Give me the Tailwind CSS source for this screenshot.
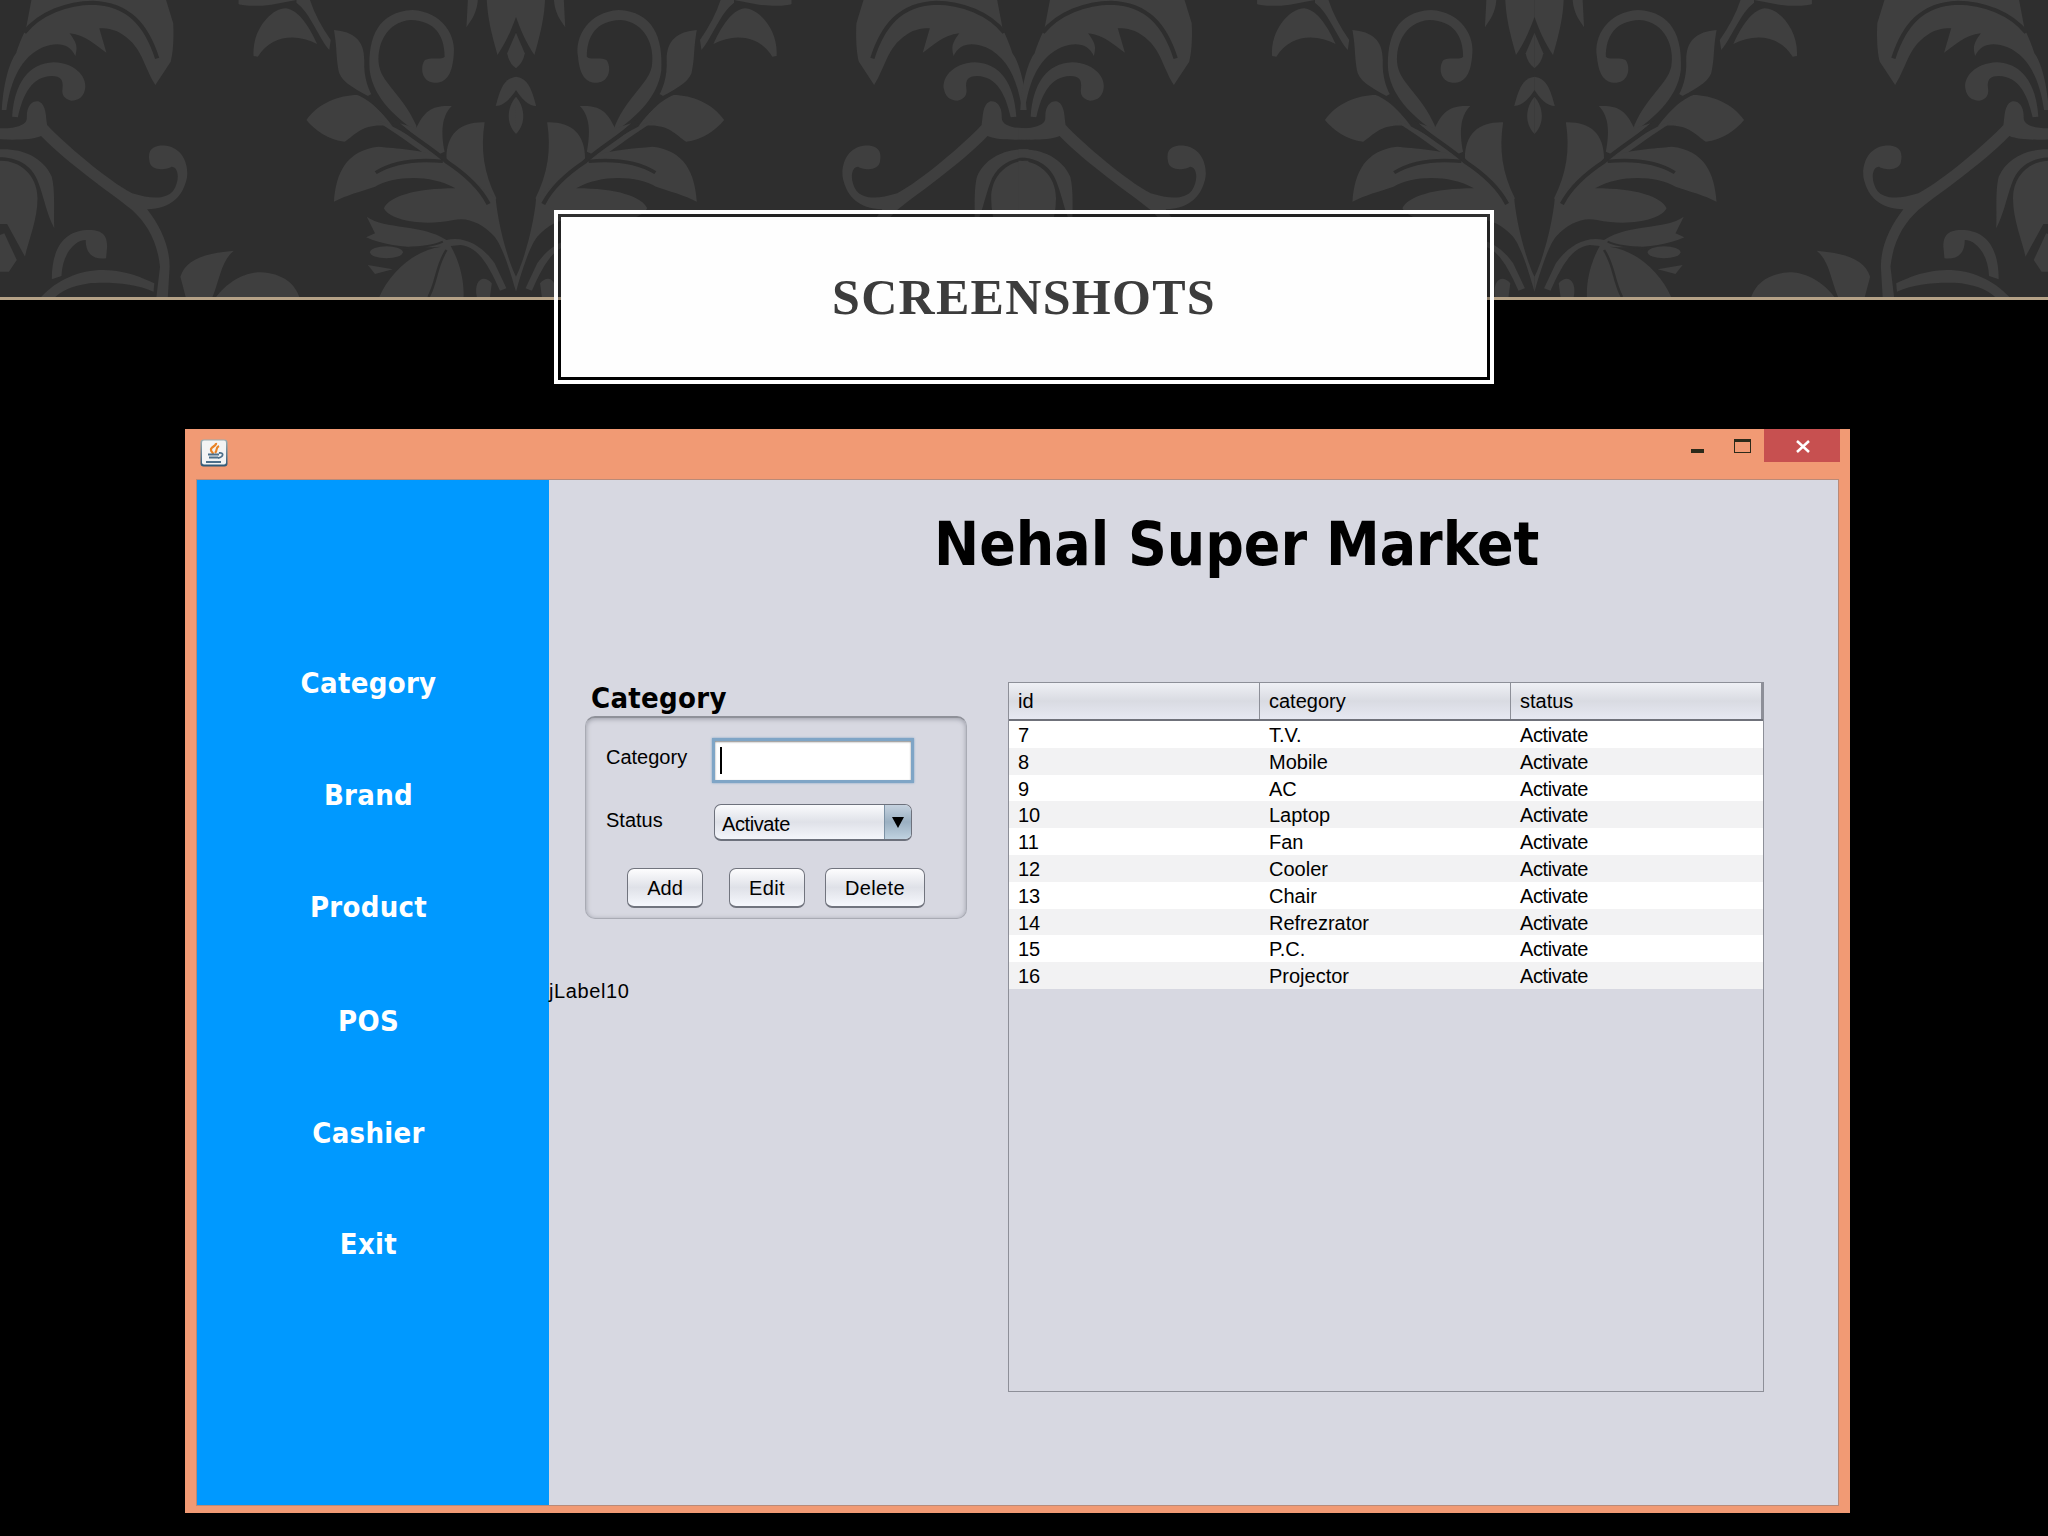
<!DOCTYPE html>
<html lang="en">
<head>
<meta charset="utf-8">
<title>Screenshots</title>
<script src="https://cdn.jsdelivr.net/npm/@tailwindcss/browser@4"></script>
</head>
<body class="w-[2048px] h-[1536px] overflow-hidden bg-black text-black">
<div class="relative w-[2048px] h-[1536px] overflow-hidden">
  <!-- damask band -->
  <header class="h-[300px] border-b-[3px] border-[#b5a287] bg-[#2e2e2e]">
    <svg class="block w-full h-full" viewBox="0 0 2048 297" preserveAspectRatio="none">
      <defs>
        <g id="damask" transform="scale(.35714 .33333)" fill="#3f3f3f">
          <path d="M5 330C10 240 30 180 45 160C60 110 72 90 72 90L88 0H465L485 70C488 130 482 170 478 185L435 255C400 195 400 145 345 105C320 85 290 85 278 85L298 158C270 138 240 105 195 100C215 130 218 140 211 168C195 130 160 125 120 142C60 170 30 240 18 330Z"/>
          <path d="M34 350C40 250 80 190 150 187C220 190 245 240 238 268C235 290 220 302 200 302C180 298 172 285 175 265C178 240 170 228 145 228C90 230 65 280 50 352Z"/>
          <path d="M0 385C40 385 78 378 75 350C75 312 95 300 110 305C130 315 128 350 132 375C180 430 300 540 370 580C430 600 468 595 485 572C505 540 500 500 480 500C470 508 420 518 418 480C412 440 440 435 465 437C520 445 530 510 522 540C510 590 480 625 412 628C450 680 475 740 475 800L470 891H438L448 800C440 720 410 670 370 630C300 570 200 500 115 408C90 420 40 420 0 418Z"/>
          <path d="M0 448C60 445 120 470 145 530C155 570 150 640 152 685C130 640 125 600 108 550C90 490 40 472 0 472Z"/>
          <path d="M0 482C50 480 105 520 105 595C105 660 80 720 70 770L20 672H0Z"/>
          <path d="M0 705L12 700L47 780L25 815H0Z"/>
          <path d="M145 838C145 730 190 690 250 690C290 690 300 710 300 740L297 775C260 780 240 760 240 720C210 720 175 760 172 828Z"/>
          <path d="M115 891C160 840 220 810 290 810C360 812 400 835 432 850L430 875C380 850 300 845 250 850C200 858 170 875 155 891Z"/>
          <path d="M520 891L505 830C520 780 570 760 655 752C620 780 615 840 595 891Z"/>
          <path d="M605 891C650 830 700 817 730 817C790 820 825 850 838 891Z"/>
          <path d="M668 0H830L760 14C720 20 680 18 668 12Z"/>
          <path d="M830 0H868C880 40 900 80 926 120L922 150C890 110 870 40 830 8Z"/>
          <path d="M710 168C705 90 760 25 800 25C840 30 870 90 888 132C830 100 760 105 722 170Z"/>
          <path d="M935 90C990 95 1020 120 1020 180C1018 230 1030 270 1050 300C1000 270 960 250 950 220C940 170 945 150 935 90Z"/>
          <path d="M1170 400C1120 360 1045 300 1035 210C1030 110 1060 35 1155 30C1240 35 1280 110 1270 170C1265 230 1245 250 1215 248C1180 245 1175 200 1190 180C1210 170 1235 182 1245 170C1245 110 1220 62 1150 60C1080 65 1052 140 1062 200C1072 250 1130 290 1165 375Z"/>
          <path d="M858 360C890 310 950 285 1000 285C1040 300 1080 350 1100 380C1020 365 1000 400 965 425C920 420 880 390 858 360Z"/>
          <path d="M1050 360C1110 375 1180 430 1240 480L1200 470C1160 440 1110 400 1050 360Z"/>
          <path d="M1120 370L1165 385C1190 330 1210 315 1265 318C1235 350 1235 400 1245 455L1225 465Z"/>
          <path d="M1250 475C1250 400 1290 365 1357 367C1345 450 1355 520 1390 595L1370 620Z"/>
          <path d="M935 605C940 520 970 450 1060 440C1110 445 1180 450 1215 465C1270 490 1330 550 1388 595C1395 680 1425 790 1445 830V876C1420 780 1400 730 1385 710C1350 670 1310 650 1270 660C1180 680 1090 660 1075 625C1090 590 1160 565 1275 565C1200 520 1100 530 1050 560C1010 575 970 585 935 605Z"/>
          <path d="M1027 650C1080 690 1180 670 1250 720C1310 705 1360 750 1385 790L1418 865L1400 872C1370 800 1340 740 1290 735L1262 738C1290 790 1300 850 1298 891H1062C1090 820 1160 750 1235 740C1160 745 1080 740 1025 712L1050 700Z"/>
          <ellipse cx="1082" cy="757" rx="46" ry="18"/>
          <path d="M1030 795L1100 808L1050 822Z"/>
          <path d="M1335 891C1325 840 1355 820 1377 850L1372 891Z"/>
          <path d="M1363 0H1445V50C1430 95 1415 130 1393 165C1370 80 1365 40 1363 0Z"/>
          <path d="M1310 0H1338C1335 40 1320 60 1306 82Z"/>
          <path d="M1445 98L1420 160Q1425 190 1445 205Z"/>
          <path d="M1445 230C1410 235 1400 270 1388 318C1410 318 1430 295 1445 270Z"/>
          <path d="M1445 290C1420 320 1415 370 1445 402Z"/>
          <g fill="none" stroke="#2e2e2e" stroke-width="12">
            <path d="M68 98C110 40 190 8 260 8C360 12 410 75 440 175"/>
            <path d="M1035 285C1100 385 1190 425 1250 485C1300 520 1345 565 1368 612"/>
            <path d="M1052 518C1110 480 1180 478 1240 484" stroke-width="10"/>
            <path d="M1130 745C1170 742 1210 740 1240 725" stroke-width="6"/>
            <path d="M1250 750C1220 800 1225 840 1200 891" stroke-width="7"/>
          </g>
        </g>
      </defs>
      <use href="#damask"/>
      <use href="#damask" transform="translate(1028.4 0) scale(-.993 1)"/>
      <use href="#damask" transform="translate(1018.5 0)"/>
      <use href="#damask" transform="translate(2050.5 0) scale(-1 1)"/>
    </svg>
  </header>

  <!-- slide title -->
  <div class="absolute left-[554px] top-[210px] w-[940px] h-[174px] border-4 border-white p-[3px] shadow-[inset_0_0_0_3px_#00000040]">
    <h1 class="flex h-full items-center justify-center bg-[#fefefe] font-['Liberation_Serif'] text-[50px] font-bold leading-none tracking-[1.3px] text-[#3c3c3c]">SCREENSHOTS</h1>
  </div>

  <!-- application window -->
  <main class="ml-[185px] mt-[129px] flex h-[1084px] w-[1665px] flex-col bg-[#f19a74] px-[11px] pb-[7px]">
    <div class="flex h-[50px] items-start">
      <svg class="ml-[4px] mt-[10px] size-[28px]" viewBox="0 0 28 28">
        <defs><linearGradient id="jb" x1="0" y1="0" x2="0" y2="1"><stop offset="0" stop-color="#9bb0b4"/><stop offset="1" stop-color="#2f5876"/></linearGradient></defs>
        <rect x=".5" y=".5" width="27" height="27" rx="3" fill="url(#jb)"/>
        <rect x="2" y="1.5" width="24" height="24" rx="2" fill="#f3f4f4"/>
        <path d="M16 4C17 7 10 8 11 11C11 13 13 13 13 15M19 7C15 9 18 11 15 14" fill="none" stroke="#e98325" stroke-width="2.2"/>
        <path d="M8 15.5H19M9 18.5H18M6 23H21" fill="none" stroke="#4d6f8a" stroke-width="2"/>
        <path d="M19 14C24 13 24 18 18 19" fill="none" stroke="#4d6f8a" stroke-width="1.8"/>
      </svg>
      <div class="-mr-px ml-auto flex items-start">
        <span class="mt-[20px] block h-[4px] w-[13px] bg-[#2c2a1a]"></span>
        <span class="ml-[30px] mt-[10px] block h-[14px] w-[17px] border border-t-[3px] border-[#2c2a1a]"></span>
        <span class="ml-[13px] flex h-[33px] w-[76px] items-center justify-center bg-[#c75050] pl-px pt-[2px]">
          <svg class="h-[13px] w-[14px]" viewBox="0 0 14 13"><path d="M1 1L13 12M13 1L1 12" stroke="#fff" stroke-width="2.5"/></svg>
        </span>
      </div>
    </div>
    <div class="flex min-h-0 flex-1 border border-[#b98a78] bg-[#d7d8e1]">
      <nav class="flex w-[352px] flex-col bg-[#0099ff] pr-[9px] pt-[148px] font-['DejaVu_Sans_Condensed','DejaVu_Sans'] text-[29px] font-bold tracking-[0.3px] text-white [font-stretch:condensed]">
        <a class="flex h-[112px] items-center justify-center">Category</a>
        <a class="flex h-[112px] items-center justify-center">Brand</a>
        <a class="flex h-[112px] items-center justify-center">Product</a>
        <a class="flex h-[112px] items-center justify-center pt-[4px]">POS</a>
        <a class="flex h-[112px] items-center justify-center pt-[4px]">Cashier</a>
        <a class="flex h-[112px] items-center justify-center pt-[2px]">Exit</a>
      </nav>
      <section class="flex flex-1 flex-col font-['Liberation_Sans'] text-[20px]">
        <h2 class="ml-[385px] mt-[28px] h-[72px] whitespace-nowrap font-['DejaVu_Sans_Condensed','DejaVu_Sans'] text-[60px] font-bold leading-[72px] [font-stretch:condensed]">Nehal Super Market</h2>
        <div class="mt-[101px] flex">
          <div class="w-[459px]">
            <h3 class="ml-[42px] h-[35px] font-['DejaVu_Sans_Condensed','DejaVu_Sans'] text-[29px] font-bold leading-[35px] tracking-[0.3px] [font-stretch:condensed]">Category</h3>
            <div class="ml-[36px] h-[203px] w-[382px] rounded-[10px] border border-t-2 border-[#a9abb4] border-t-[#8f9199] pl-[20px] pt-[20px] shadow-[inset_0_1px_5px_#9a9ca6]">
              <div class="flex h-[45px] items-center">
                <label class="w-[106px] pb-[7px]">Category</label>
                <div class="flex h-[45px] w-[202px] items-center border-[3px] border-[#7fa5c6] bg-white pl-[5px] shadow-[inset_0_1px_2px_#888,0_0_2px_#7fa5c6]"><span class="h-[27px] w-[2px] bg-black"></span></div>
              </div>
              <div class="mt-[21px] flex h-[37px] items-center">
                <label class="w-[108px] pb-[5px]">Status</label>
                <div class="flex h-[37px] w-[198px] overflow-hidden rounded-[7px] border border-b-2 border-[#6d717c] bg-linear-to-b from-[#fafbfd] via-[#dfe1e8] to-[#f4f6fb]">
                  <span class="flex-1 pl-[7px] pt-[2px] leading-[35px] tracking-[-0.4px]">Activate</span>
                  <span class="flex w-[27px] items-start justify-center border-l border-[#7d92a5] bg-linear-to-b from-[#c5d2df] via-[#9bb0c2] to-[#c0d2e0] pt-[12px]"><svg class="h-[11px] w-[12px]" viewBox="0 0 12 11"><path d="M0 0H12L6 11Z"/></svg></span>
                </div>
              </div>
              <div class="mt-[27px] flex pl-[21px]">
                <button class="h-[40px] w-[76px] rounded-[7px] border border-b-2 border-[#71747e] bg-linear-to-b from-[#fdfdfe] via-[#dfe1e8] to-[#f6f8fd] pt-px">Add</button>
                <button class="ml-[26px] h-[40px] w-[76px] rounded-[7px] border border-b-2 border-[#71747e] bg-linear-to-b from-[#fdfdfe] via-[#dfe1e8] to-[#f6f8fd] pt-px tracking-[0.4px]">Edit</button>
                <button class="ml-[20px] h-[40px] w-[100px] rounded-[7px] border border-b-2 border-[#71747e] bg-linear-to-b from-[#fdfdfe] via-[#dfe1e8] to-[#f6f8fd] pt-px tracking-[0.4px]">Delete</button>
              </div>
            </div>
            <p class="mt-[58px] leading-[28px] tracking-[0.6px]">jLabel10</p>
          </div>
          <div class="mt-[1px] h-[710px] w-[756px] border-[1.5px] border-[#8d8f98]">
            <div class="grid h-[38px] grid-cols-[251px_251px_1fr] border-b-2 border-[#6f717a] bg-linear-to-b from-[#eff0f5] via-[#d9dbe2] to-[#e6e8f2] leading-[36px]">
              <span class="border-r border-[#8d8f98] pl-[9px]">id</span><span class="border-r border-[#8d8f98] pl-[9px]">category</span><span class="border-r-2 border-[#8d8f98] pl-[9px]">status</span>
            </div>
            <div id="rows"></div>
          </div>
        </div>
      </section>
    </div>
  </main>
</div>
<script>
  const data = [[7,'T.V.'],[8,'Mobile'],[9,'AC'],[10,'Laptop'],[11,'Fan'],[12,'Cooler'],[13,'Chair'],[14,'Refrezrator'],[15,'P.C.'],[16,'Projector']];
  document.getElementById('rows').innerHTML = data.map(([id, name]) =>
    `<div class="grid h-[26.8px] grid-cols-[251px_251px_1fr] bg-white leading-[28px] even:bg-[#f2f2f3]"><span class="pl-[9px]">${id}</span><span class="pl-[9px]">${name}</span><span class="pl-[9px] tracking-[-0.4px]">Activate</span></div>`).join('');
</script>
</body>
</html>
